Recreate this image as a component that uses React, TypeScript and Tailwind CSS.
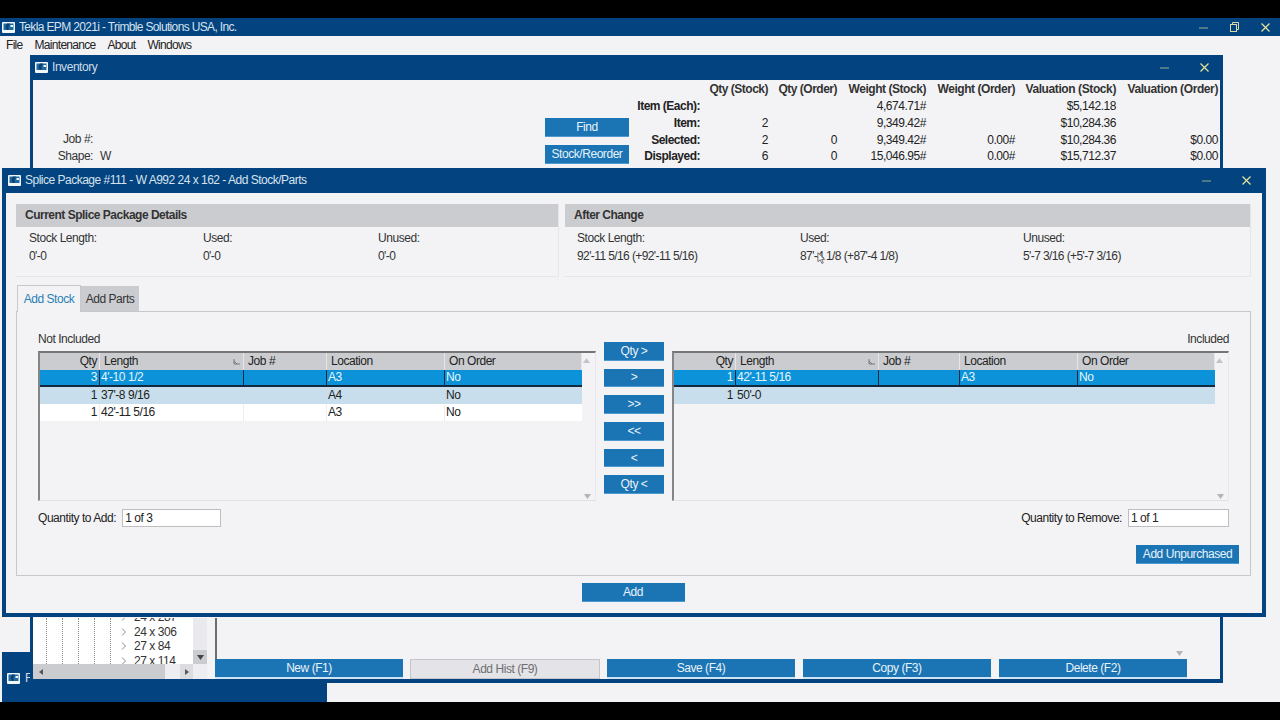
import React from "react";

const font = "font-['Liberation_Sans',Arial,sans-serif]";

function WinIcon({ className = "" }: { className?: string }) {
  return (
    <svg viewBox="0 0 13 11" className={className}>
      <rect x="0" y="0" width="13" height="11" rx="1" fill="#f4f7fa" />
      <rect x="1.5" y="1.5" width="10" height="6.5" fill="#1d6aa3" />
      <path d="M5 1.5 L8 1.5 L6.5 4.5 L6.5 8 L5 8 L3.5 5 Z" fill="#0c3f6f" />
      <path d="M8.5 3 L11 3 L11 5 L8.5 5 Z" fill="#f4f7fa" />
    </svg>
  );
}

function WinControls({ restore = false, gap = "gap-[29px]" }: { restore?: boolean; gap?: string }) {
  return (
    <div className={`flex items-center ${gap}`}>
      <svg viewBox="0 0 9 9" className="w-[9px] h-[9px]"><path d="M0 5 H9" stroke="#7f9f8c" strokeWidth="1.2" /></svg>
      {restore && (
        <svg viewBox="0 0 9 10" className="w-[9px] h-[10px]" fill="none" stroke="#d8d8a8" strokeWidth="1">
          <rect x="0.5" y="2.5" width="6" height="7" />
          <path d="M2.5 2.5 V0.5 H8.5 V7.5 H6.5" />
        </svg>
      )}
      <svg viewBox="0 0 9 9" className="w-[9px] h-[9px]"><path d="M0.5 0.5 L8.5 8.5 M8.5 0.5 L0.5 8.5" stroke="#e6e29a" strokeWidth="1.2" /></svg>
    </div>
  );
}

function Btn({ children, className = "" }: { children: React.ReactNode; className?: string }) {
  return (
    <div className={`flex items-center justify-center bg-[#1b75b4] border-b border-[#4d9ad0] text-[#e8f2f9] ${className}`}>
      {children}
    </div>
  );
}

function Detail({ label, value, w }: { label: string; value: string; w: string }) {
  return (
    <div className={`${w} flex flex-col gap-[4px]`}>
      <span className="text-[#333] leading-[14px]">{label}</span>
      <span className="text-[#333] leading-[14px] tracking-[-0.6px]">{value}</span>
    </div>
  );
}

type Row = [string, string, string, string, string];

function Grid({ cols, rows, width, rowW }: { cols: number[]; rows: Row[]; width: string; rowW: string }) {
  const heads = ["Qty", "Length", "Job #", "Location", "On Order"];
  return (
    <div className={`relative ${width} h-[150px] border-t-2 border-l-2 border-t-[#757575] border-l-[#858585] border-b border-r border-b-[#e2e2e6] border-r-[#e8e8ec] shrink-0`}>
      <div className={`${rowW} flex h-[17px] bg-[#cbccd0] text-[#222]`}>
        {heads.map((h, i) => (
          <div
            key={h}
            style={{ width: cols[i] }}
            className={`relative flex items-center shrink-0 border-r border-[#e6e6ea] pb-[1px] ${i === 0 ? "justify-end pr-[2px]" : "pl-[4px]"}`}
          >
            {h}
            {i === 1 && (
              <svg viewBox="0 0 7 6" className="absolute right-[3px] top-[6px] w-[7px] h-[6px]">
                <path d="M1 0 V5 H7 M1 2 L4 5" stroke="#777" strokeWidth="1" fill="none" />
              </svg>
            )}
          </div>
        ))}
      </div>
      {rows.map((r, ri) => (
        <div
          key={ri}
          className={`${rowW} flex h-[17px] ${
            ri === 0
              ? "bg-[#0b92d8] text-[#e9f6fd] border-b-2 border-[#12293f]"
              : ri === 1
              ? "bg-[#c9deec] text-[#222]"
              : "bg-white text-[#222]"
          }`}
        >
          {r.map((c, i) => (
            <div
              key={i}
              style={{ width: cols[i] }}
              className={`flex items-center shrink-0 border-r ${
                ri === 0 ? "border-[#12293f] pb-[1px]" : ri === 1 ? "border-transparent pb-[2px]" : "border-[#eceef0] pb-[2px]"
              } ${i === 0 ? "justify-end pr-[2px]" : "pl-[1px]"} last:border-r-0`}
            >
              {c}
            </div>
          ))}
        </div>
      ))}
      <svg viewBox="0 0 7 5" className="absolute right-[5px] top-[5px] w-[7px] h-[5px]"><path d="M3.5 0 L7 5 H0 Z" fill="#c4c4c8" /></svg>
      <svg viewBox="0 0 7 5" className="absolute right-[4px] bottom-[1px] w-[7px] h-[5px]"><path d="M3.5 5 L7 0 H0 Z" fill="#b4b4b8" /></svg>
    </div>
  );
}

const summary: string[][] = [
  ["Item (Each):", "", "", "4,674.71#", "", "$5,142.18", ""],
  ["Item:", "2", "", "9,349.42#", "", "$10,284.36", ""],
  ["Selected:", "2", "0", "9,349.42#", "0.00#", "$10,284.36", "$0.00"],
  ["Displayed:", "6", "0", "15,046.95#", "0.00#", "$15,712.37", "$0.00"],
];

export default function App() {
  return (
    <div className={`${font} text-[12px] tracking-[-0.45px] relative w-[1280px] h-[720px] overflow-hidden bg-black`}>
      {/* main application window */}
      <div className="absolute left-0 top-[18px] w-[1280px] h-[684px] bg-[#f3f3f6] flex flex-col">
        <div className="h-[18px] bg-[#03437f] flex items-center justify-between pl-[2px] pr-[10px] shrink-0">
          <div className="flex items-center gap-[4px]">
            <WinIcon className="w-[13px] h-[11px]" />
            <span className="text-[#d6e2ee] tracking-[-0.65px]">Tekla EPM 2021i - Trimble Solutions USA, Inc.</span>
          </div>
          <WinControls restore gap="gap-[22px]" />
        </div>
        <div className="h-[17px] flex items-center gap-[12px] pl-[6px] text-[#222] tracking-[-0.7px] shrink-0">
          <span>File</span>
          <span>Maintenance</span>
          <span>About</span>
          <span>Windows</span>
        </div>
        <div className="flex-1" />
        <div className="h-[50px] w-[325px] ml-[2px] bg-[#03437f] shrink-0" />
      </div>

      {/* minimized window caption */}
      <div className="absolute left-[7px] top-[669px] flex items-center gap-[5px]">
        <WinIcon className="w-[13px] h-[11px]" />
        <span className="text-[#cfdcea]">F</span>
      </div>

      {/* inventory window */}
      <div className="absolute left-[30px] top-[55px] w-[1193px] h-[628px] border-x-[3px] border-b-[4px] border-[#03437f] bg-[#f3f3f6] flex flex-col">
        <div className="h-[25px] -mx-[3px] bg-[#03437f] flex items-center justify-between pl-[5px] pr-[14px] shrink-0">
          <div className="flex items-center gap-[4px]">
            <WinIcon className="w-[13px] h-[11px]" />
            <span className="text-[#cfdcea] pb-[1px]">Inventory</span>
          </div>
          <WinControls gap="gap-[31px]" />
        </div>
        <div className="relative flex pt-[1px] h-[88px] text-[#111] shrink-0">
          <div className="w-[60px] pt-[51px] flex flex-col items-end gap-[3px] text-[#333] shrink-0 leading-[14px]">
            <span>Job #:</span>
            <span>Shape:</span>
          </div>
          <div className="pt-[68px] pl-[7px] text-[#333] w-[452px] leading-[14px] shrink-0">W</div>
          <div className="pt-[37px] flex flex-col gap-[8px] shrink-0">
            <Btn className="w-[84px] h-[19px]">Find</Btn>
            <Btn className="w-[84px] h-[19px]">Stock/Reorder</Btn>
          </div>
          <div className="grid grid-cols-[71px_68px_69px_89px_89px_101px_102px] auto-rows-[16.75px] items-center justify-items-end text-[#222] shrink-0">
            <span />
            <span className="font-bold text-[#333] tracking-[-0.5px]">Qty (Stock)</span>
            <span className="font-bold text-[#333] tracking-[-0.5px]">Qty (Order)</span>
            <span className="font-bold text-[#333] tracking-[-0.45px]">Weight (Stock)</span>
            <span className="font-bold text-[#333] tracking-[-0.45px]">Weight (Order)</span>
            <span className="font-bold text-[#333] tracking-[-0.4px]">Valuation (Stock)</span>
            <span className="font-bold text-[#333] tracking-[-0.4px]">Valuation (Order)</span>
            {summary.map((r, i) =>
              r.map((c, j) => (
                <span key={`${i}-${j}`} className={j === 0 ? "font-bold text-[#222] tracking-[-0.5px]" : ""}>
                  {c}
                </span>
              ))
            )}
          </div>
        </div>
        <div className="flex-1" />
        {/* tree, lower part */}
        <div className="relative h-[61px] flex shrink-0">
          <div className="w-[174px] h-full flex flex-col shrink-0">
            <div className="relative flex-1 overflow-hidden flex">
              <div className="relative w-[160px] h-full bg-white shrink-0 overflow-hidden">
                <div className="absolute inset-0 flex gap-[15px] pl-[13px]">
                  {[0, 1, 2, 3, 4, 5].map((i) => (
                    <div key={i} className="h-full border-l border-dotted border-[#8a8a8a]" />
                  ))}
                </div>
                <div className="absolute left-[87px] -top-[8px] flex flex-col gap-[0.5px] text-[#333] leading-[14px] bg-white pl-[1px]">
                  {["24 x 287", "24 x 306", "27 x 84", "27 x 114"].map((t) => (
                    <div key={t} className="flex items-center gap-[8px]">
                      <svg viewBox="0 0 5 8" className="w-[5px] h-[8px] shrink-0"><path d="M1 0.5 L4.5 4 L1 7.5" stroke="#8a8a8a" fill="none" /></svg>
                      <span>{t}</span>
                    </div>
                  ))}
                </div>
              </div>
              <div className="flex-1 flex flex-col justify-end bg-[#e9e9ee]">
                <div className="h-[14px] bg-[#cbccd0] flex items-center justify-center">
                  <svg viewBox="0 0 7 5" className="w-[7px] h-[5px]"><path d="M3.5 5 L7 0 H0 Z" fill="#444" /></svg>
                </div>
              </div>
            </div>
            <div className="h-[15px] flex items-center bg-[#eeeef2] shrink-0">
              <div className="w-[132px] h-full bg-[#cbccd0] flex items-center pl-[6px]">
                <svg viewBox="0 0 4 6" className="w-[4px] h-[6px]"><path d="M4 0 V6 L0 3 Z" fill="#555" /></svg>
              </div>
              <div className="w-[15px]" />
              <div className="w-[13px] h-full bg-[#dcdce0] flex items-center justify-center">
                <svg viewBox="0 0 4 6" className="w-[4px] h-[6px]"><path d="M0 0 V6 L4 3 Z" fill="#555" /></svg>
              </div>
            </div>
          </div>
          <div className="flex-1 pl-[8px] flex flex-col">
            <div className="flex-1 relative border-l-2 border-[#6e6e6e] w-[972px]">
              <svg viewBox="0 0 7 5" className="absolute right-[4px] top-[33px] w-[7px] h-[5px]"><path d="M3.5 5 L7 0 H0 Z" fill="#b4b4b8" /></svg>
            </div>
            <div className="flex h-[20px] shrink-0">
              <Btn className="w-[188px] border-b-2 border-[#cfe3f2]">New (F1)</Btn>
              <div className="w-[190px] ml-[7px] bg-[#e4e4e8] border border-[#c6c6ca] flex items-center justify-center text-[#6f6f72]">Add Hist (F9)</div>
              <Btn className="w-[188px] ml-[7px] border-b-2 border-[#cfe3f2]">Save (F4)</Btn>
              <Btn className="w-[188px] ml-[8px] border-b-2 border-[#cfe3f2]">Copy (F3)</Btn>
              <Btn className="w-[188px] ml-[8px] border-b-2 border-[#cfe3f2]">Delete (F2)</Btn>
            </div>
          </div>
        </div>
      </div>

      {/* splice package dialog */}
      <div className="absolute left-[2px] top-[168px] w-[1264px] h-[449px] border-x-[4px] border-b-[4px] border-[#03437f] bg-[#f3f3f6] flex flex-col text-[#222]">
        <div className="h-[25px] -mx-[4px] bg-[#03437f] flex items-center justify-between pl-[6px] pr-[15px] shrink-0">
          <div className="flex items-center gap-[4px]">
            <WinIcon className="w-[13px] h-[11px]" />
            <span className="text-[#d6e2ee] tracking-[-0.5px] pb-[1px]">Splice Package #111 - W A992 24 x 162 - Add Stock/Parts</span>
          </div>
          <WinControls gap="gap-[31px]" />
        </div>

        <div className="flex gap-[6px] pl-[10px] pt-[11px] shrink-0">
          <div className="w-[543px] h-[73px] border-b border-r border-[#e6e6ea] flex flex-col shrink-0">
            <div className="h-[23px] bg-[#cbccd0] flex items-center pl-[9px] pb-[1px] font-bold text-[#333] shrink-0 tracking-[-0.5px]">Current Splice Package Details</div>
            <div className="flex pl-[13px] pt-[4px]">
              <Detail w="w-[174px]" label="Stock Length:" value="0'-0" />
              <Detail w="w-[175px]" label="Used:" value="0'-0" />
              <Detail w="w-[150px]" label="Unused:" value="0'-0" />
            </div>
          </div>
          <div className="w-[686px] h-[73px] border-b border-r border-[#e6e6ea] flex flex-col shrink-0">
            <div className="h-[23px] bg-[#cbccd0] flex items-center pl-[9px] pb-[1px] font-bold text-[#333] shrink-0 tracking-[-0.5px]">After Change</div>
            <div className="flex pl-[12px] pt-[4px]">
              <Detail w="w-[223px]" label="Stock Length:" value="92'-11 5/16 (+92'-11 5/16)" />
              <Detail w="w-[223px]" label="Used:" value="87'-4 1/8 (+87'-4 1/8)" />
              <Detail w="w-[200px]" label="Unused:" value="5'-7 3/16 (+5'-7 3/16)" />
            </div>
          </div>
        </div>

        <div className="flex items-end pl-[11px] pt-[7px] h-[34px] shrink-0">
          <div className="w-[64px] h-[27px] bg-[#f3f3f6] border-t border-x border-[#c8c8cc] flex items-center justify-center text-[#2b7fb3] -mb-[1px] relative">Add Stock</div>
          <div className="w-[58px] h-[25px] pt-[1px] bg-[#cbccd0] flex items-center justify-center text-[#333]">Add Parts</div>
        </div>

        <div className="ml-[10px] w-[1235px] h-[265px] border border-[#c8c8cc] flex flex-col pl-[21px] pr-[21px] shrink-0">
          <div className="flex justify-between h-[39px] items-end pb-[3px] text-[#333] shrink-0">
            <span>Not Included</span>
            <span>Included</span>
          </div>
          <div className="flex shrink-0">
            <Grid
              cols={[60, 144, 83, 118, 137]}
              rows={[
                ["3", "4'-10 1/2", "", "A3", "No"],
                ["1", "37'-8 9/16", "", "A4", "No"],
                ["1", "42'-11 5/16", "", "A3", "No"],
              ]}
              width="w-[558px]"
              rowW="w-[542px]"
            />
            <div className="w-[76px] flex flex-col items-center gap-[8.2px] -mt-[9px] shrink-0 text-white">
              {["Qty >", ">", ">>", "<<", "<", "Qty <"].map((t) => (
                <Btn key={t} className="w-[60px] h-[18.5px] shrink-0">{t}</Btn>
              ))}
            </div>
            <Grid
              cols={[62, 143, 81, 118, 137]}
              rows={[
                ["1", "42'-11 5/16", "", "A3", "No"],
                ["1", "50'-0", "", "", ""],
              ]}
              width="w-[557px]"
              rowW="w-[541px]"
            />
          </div>
          <div className="flex justify-between items-center pt-[8px] shrink-0 text-[#222]">
            <div className="flex items-center gap-[6px]">
              <span>Quantity to Add:</span>
              <div className="w-[99px] h-[18px] bg-white border border-[#bdbdc2] flex items-center pl-[2px]">1 of 3</div>
            </div>
            <div className="flex items-center gap-[6px]">
              <span>Quantity to Remove:</span>
              <div className="w-[101px] h-[18px] bg-white border border-[#bdbdc2] flex items-center pl-[2px]">1 of 1</div>
            </div>
          </div>
          <div className="flex justify-end pt-[18px] -mr-[10px] shrink-0">
            <Btn className="w-[103px] h-[19px]">Add Unpurchased</Btn>
          </div>
        </div>

        <div className="flex justify-center pt-[7px] pr-[2px] shrink-0">
          <Btn className="w-[103px] h-[19px]">Add</Btn>
        </div>
      </div>

      {/* mouse pointer */}
      <svg viewBox="0 0 10 14" className="absolute left-[817px] top-[252px] w-[9px] h-[13px]">
        <path d="M1 0.5 V10.5 L3.5 8.5 L5.5 12.5 L7 11.8 L5.2 8 L8.5 8 Z" fill="#f8f8f8" stroke="#444" strokeWidth="0.8" />
      </svg>
    </div>
  );
}
